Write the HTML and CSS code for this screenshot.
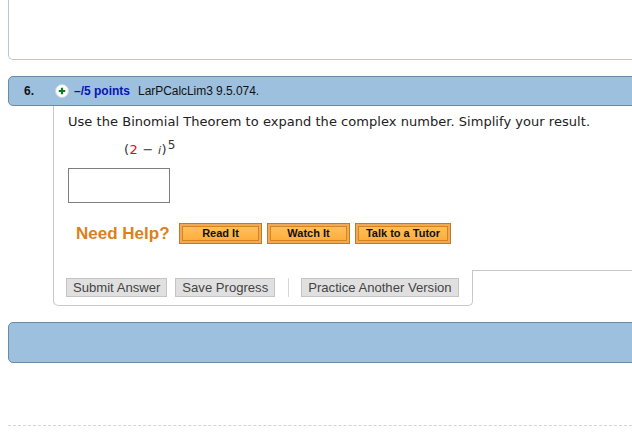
FILE: index.html
```html
<!DOCTYPE html>
<html lang="en">
<head>
    <meta charset="UTF-8">
    <title>Question 6</title>
    <link rel="stylesheet" href="styles.css">
</head>
<body>
    <div class="prev-panel"></div>

    <div class="q-head">
        <span class="q-num">6.</span>
        <span class="q-plus">
            <svg width="14" height="14" viewBox="0 0 14 14">
                <circle cx="7" cy="7" r="6.5" fill="#fff" stroke="#c9d3dc"/>
                <path d="M7 3.8v6.4M3.8 7h6.4" stroke="#0a7d1e" stroke-width="2.2"/>
            </svg>
        </span>
        <span class="q-points">&ndash;/5 points</span>
        <span class="q-ref">LarPCalcLim3 9.5.074.</span>
    </div>

    <div class="q-body">
        <p class="q-text">Use the Binomial Theorem to expand the complex number. Simplify your result.</p>
        <p class="q-math">(<span class="red">2</span> &minus; <i>i</i>)<sup>5</sup></p>
        <input class="q-input" type="text">

        <div class="help">
            <span class="help-label">Need Help?</span>
            <a class="help-btn btn-read">Read It</a>
            <a class="help-btn btn-watch">Watch It</a>
            <a class="help-btn btn-tutor">Talk to a Tutor</a>
        </div>

        <div class="actions-row">
            <div class="actions">
                <button class="gray-btn">Submit Answer</button>
                <button class="gray-btn">Save Progress</button>
                <span class="sep"></span>
                <button class="gray-btn">Practice Another Version</button>
            </div>
            <div class="actions-rest"></div>
        </div>
    </div>

    <div class="next-head"></div>
    <div class="dashed"></div>
</body>
</html>
```

FILE: styles.css
```css
html, body {
    overflow: hidden;
}
body {
    margin: 0;
    padding-left: 8px;
    height: 432px;
    box-sizing: border-box;
    background: #fff;
    font-family: "Liberation Sans", Arial, sans-serif;
}
.prev-panel {
    height: 60px;
    box-sizing: border-box;
    margin-right: -10px;
    border-left: 1px solid #b4c9db;
    border-bottom: 1px solid #b4c9db;
    border-bottom-left-radius: 5px;
}
.q-head {
    display: flex;
    align-items: center;
    height: 30px;
    box-sizing: border-box;
    margin: 16px -10px 0 0;
    background: #9dc0de;
    border: 1px solid #6b8aa5;
    border-radius: 5px 0 0 5px;
    font-size: 12px;
    color: #111;
}
.q-num {
    width: 46px;
    padding-left: 15px;
    box-sizing: border-box;
    font-weight: bold;
}
.q-plus {
    display: flex;
    width: 19px;
}
.q-points {
    color: #0a14b4;
    font-weight: bold;
    margin-right: 8px;
}
.q-ref {
    letter-spacing: -0.05px;
}
.q-body {
    margin-left: 45px;
    margin-right: -10px;
    height: 200px;
    box-sizing: border-box;
    border-left: 1px solid #c8c8c8;
    display: flex;
    flex-direction: column;
    border-bottom-left-radius: 5px;
}
.q-text {
    margin: 8px 0 0 14px;
    font-family: "DejaVu Sans", Verdana, sans-serif;
    font-size: 13px;
    letter-spacing: 0.04px;
    line-height: 16px;
    color: #222;
}
.q-math {
    margin: 11px 0 0 70px;
    font-family: "DejaVu Sans", Verdana, sans-serif;
    font-size: 13px;
    letter-spacing: 0.3px;
    line-height: 18px;
    color: #333;
}
.q-math sup {
    font-size: 12px;
    line-height: 0;
    margin-left: 1px;
}
.q-math i {
    font-size: 11px;
}
.red {
    color: #d4101c;
}
.q-input {
    display: block;
    width: 102px;
    height: 35px;
    box-sizing: border-box;
    margin: 8px 0 0 14px;
    padding: 0;
    border: 1px solid #7f7f7f;
    background: #fff;
}
.help {
    display: flex;
    align-items: center;
    margin: 20px 0 0 22px;
    height: 21px;
}
.help-label {
    color: #e07f1a;
    font-size: 17px;
    font-weight: bold;
    width: 103px;
    flex-shrink: 0;
}
.help-btn {
    display: block;
    height: 21px;
    box-sizing: border-box;
    margin-right: 5px;
    border: 1px solid #c8791e;
    padding: 3px;
    color: #111;
    font-size: 11px;
    font-weight: bold;
    text-align: center;
    line-height: 13px;
    background: linear-gradient(#ffc463, #ffa935);
    box-shadow: inset 0 0 0 2px #eda95c, inset 0 0 0 3px #d8841c;
}
.btn-read, .btn-watch {
    width: 83px;
}
.btn-tutor {
    width: 96px;
}
.actions-row {
    display: flex;
    margin-top: 26px;
    flex: 1;
}
.actions {
    width: 419px;
    flex-shrink: 0;
    box-sizing: border-box;
    display: flex;
    align-items: flex-start;
    padding: 8px 0 0 12px;
    border-right: 1px solid #c8c8c8;
    border-bottom: 1px solid #c8c8c8;
    border-bottom-left-radius: 5px;
    border-bottom-right-radius: 5px;
}
.actions-rest {
    flex: 1;
    border-top: 1px solid #c8c8c8;
}
.gray-btn {
    height: 19px;
    box-sizing: border-box;
    margin: 0 8px 0 0;
    padding: 0 6px;
    background: #e0e0e0;
    border: 1px solid #c4c4c4;
    color: #444;
    font-family: "Liberation Sans", Arial, sans-serif;
    font-size: 13.1px;
    line-height: 16px;
    white-space: nowrap;
    flex-shrink: 0;
}
.sep {
    width: 1px;
    height: 19px;
    background: #d8d8d8;
    margin: 0 12px 0 5px;
    flex-shrink: 0;
}
.next-head {
    height: 41px;
    box-sizing: border-box;
    margin: 16px -10px 0 0;
    background: #9dc0de;
    border: 1px solid #6b8aa5;
    border-radius: 5px 0 0 5px;
}
.dashed {
    margin: 62px -10px 0 0;
    border-top: 1px dashed #d4d4d4;
}
```
